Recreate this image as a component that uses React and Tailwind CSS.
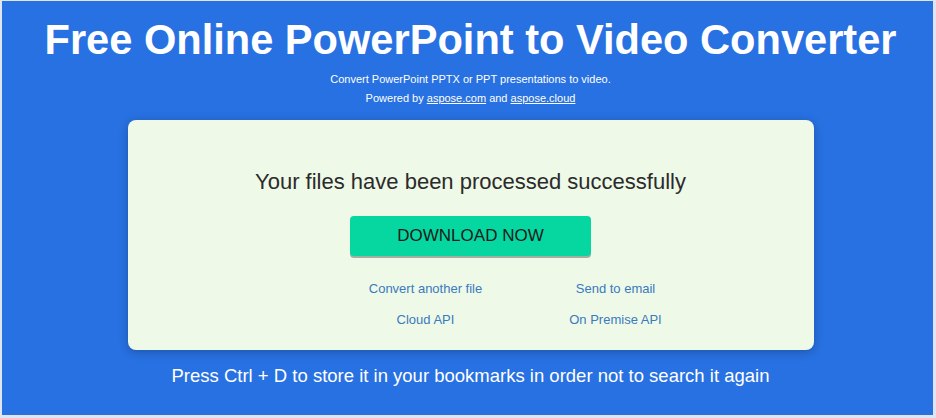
import React from "react";

export default function App() {
  return (
    <div className="w-[936px] h-[418px] bg-[#dfe6f2] pl-[2px] pt-[1px] pr-[3px] pb-[3px]" style={{ fontFamily: '"Liberation Sans", Arial, sans-serif' }}>
      <div className="h-full bg-[#2871e2] pl-[6px] flex flex-col items-center text-white">
        <h1 className="mt-[15px] text-[41.6px] leading-[48px] font-bold">Free Online PowerPoint to Video Converter</h1>
        <p className="mt-[6px] text-[11px] leading-[19px]">Convert PowerPoint PPTX or PPT presentations to video.</p>
        <p className="text-[11px] leading-[19px]">
          Powered by <a className="underline">aspose.com</a> and <a className="underline">aspose.cloud</a>
        </p>
        <div className="mt-[12px] w-[686px] h-[230px] rounded-[8px] bg-[#eef9e8] shadow-[0_2px_10px_rgba(0,0,0,0.25)] flex flex-col items-center text-[#2b2b2b]">
          <div className="mt-[48px] text-[22px] leading-[28px]">Your files have been processed successfully</div>
          <button className="mt-[20px] w-[241px] h-[40px] rounded-[4px] bg-[#06d6a0] text-[17px] text-[#1a1a1a] shadow-[0_2px_0_rgba(0,0,0,0.3)]">DOWNLOAD NOW</button>
          <div className="mt-[17px] ml-[100px] grid grid-cols-[190px_190px] text-[13px] leading-[31px] text-[#3a7abf] text-center">
            <a>Convert another file</a>
            <a>Send to email</a>
            <a>Cloud API</a>
            <a>On Premise API</a>
          </div>
        </div>
        <p className="mt-[14px] text-[18.5px] leading-[24px]">Press Ctrl + D to store it in your bookmarks in order not to search it again</p>
      </div>
    </div>
  );
}
